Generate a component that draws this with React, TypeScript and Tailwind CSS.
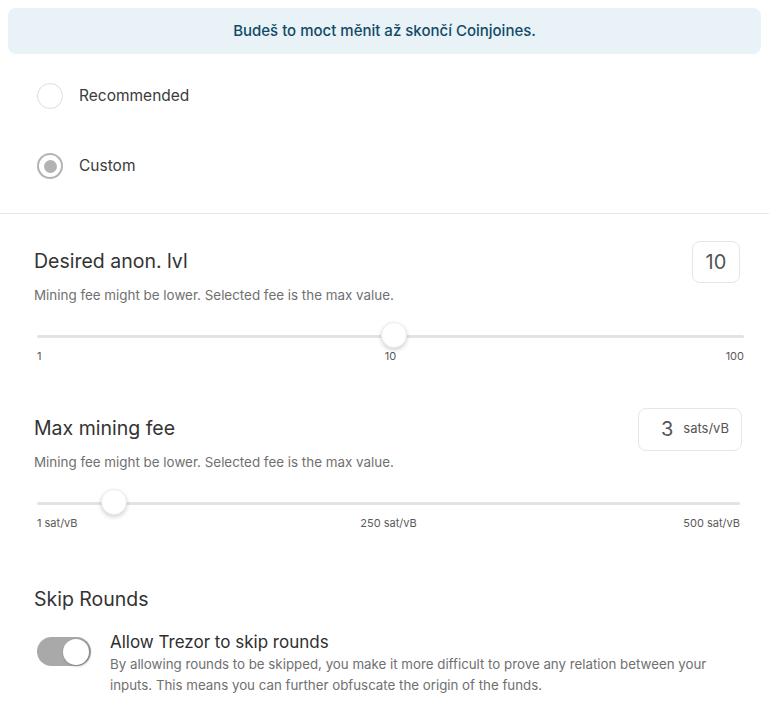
import React from 'react';

const font = { fontFamily: 'Inter, "Noto Sans", sans-serif' };

function Radio({ label, checked }: { label: string; checked?: boolean }) {
  return (
    <div className="flex h-[44px] items-center gap-[16px] pl-[37px]">
      {checked ? (
        <span className="flex h-[26px] w-[26px] items-center justify-center rounded-full border-2 border-[#b3b3b3] bg-white">
          <span className="h-[13px] w-[13px] rounded-full bg-[#b3b3b3]" />
        </span>
      ) : (
        <span className="h-[26px] w-[26px] rounded-full border border-[#dcdcdc] bg-white" />
      )}
      <span className="text-[15.5px] text-[#3b3b3b]">{label}</span>
    </div>
  );
}

function Slider({ pos, labels }: { pos: number; labels: string[] }) {
  return (
    <div className="pl-[3px]">
      <div className="relative h-[26px]">
        <div className="absolute left-0 right-0 top-[13px] h-[3px] rounded bg-[#e3e3e3]" />
        <div
          className="absolute top-0 h-[26px] w-[26px] -translate-x-1/2 rounded-full border border-[#ececec] bg-white shadow-[0_2px_4px_rgba(0,0,0,0.18)]"
          style={{ left: `${pos}%` }}
        />
      </div>
      <div className="mt-[1px] grid grid-cols-3 text-[11px] leading-[14px] text-[#5a5a5a]">
        <span className="text-left">{labels[0]}</span>
        <span className="text-center">{labels[1]}</span>
        <span className="text-right">{labels[2]}</span>
      </div>
    </div>
  );
}

function Section({
  title,
  box,
  pos,
  labels,
  right,
  sliderRight,
}: {
  title: string;
  box: React.ReactNode;
  pos: number;
  labels: string[];
  right: string;
  sliderRight: string;
}) {
  return (
    <div className={`pl-[34px] ${right}`}>
      <div className="flex h-[42px] items-center justify-between">
        <h3 className="text-[19.5px] font-normal text-[#333333]">{title}</h3>
        {box}
      </div>
      <p className="mt-[3px] text-[13.4px] leading-[18px] text-[#707070]">
        Mining fee might be lower. Selected fee is the max value.
      </p>
      <div className={`mt-[18px] ${sliderRight}`}>
        <Slider pos={pos} labels={labels} />
      </div>
    </div>
  );
}

export default function App() {
  return (
    <div className="min-h-[720px] w-[769px] bg-white" style={font}>
      <div className="px-[8px] pt-[8px]">
        <div className="flex h-[46px] items-center justify-center rounded-[8px] bg-[#e8f2f7] text-[15px] font-medium text-[#114a66]">
          Budeš to moct měnit až skončí Coinjoines.
        </div>
      </div>

      <div className="mt-[20px] flex flex-col gap-[26px]">
        <Radio label="Recommended" />
        <Radio label="Custom" checked />
      </div>

      <div className="mt-[25px] h-px bg-[#e8e8e8]" />

      <div className="mt-[27px]">
        <Section
          title="Desired anon. lvl"
          pos={50.5}
          labels={['1', '10', '100']}
          right="pr-[25px]"
          sliderRight=""
          box={
            <div className="mr-[4px] flex h-[42px] w-[48px] items-center justify-center rounded-[8px] border border-[#e6e6e6] text-[20px] text-[#555555]">
              10
            </div>
          }
        />
      </div>

      <div className="mt-[45px]">
        <Section
          title="Max mining fee"
          pos={11}
          labels={['1 sat/vB', '250 sat/vB', '500 sat/vB']}
          right="pr-[27px]"
          sliderRight="pr-[2px]"
          box={
            <div className="flex h-[43px] w-[104px] items-center justify-end gap-[10px] rounded-[8px] border border-[#e6e6e6] pr-[12px] text-[#555555]">
              <span className="text-[20px]">3</span>
              <span className="text-[13px]">sats/vB</span>
            </div>
          }
        />
      </div>

      <div className="mt-[55px] pl-[34px] pr-[40px]">
        <h3 className="text-[19.5px] font-normal text-[#333333]">Skip Rounds</h3>
        <div className="mt-[17px] flex gap-[19px] pl-[3px]">
          <div className="mt-[6px] flex h-[29px] w-[54px] shrink-0 items-center justify-end rounded-full bg-[#a9a9a9] px-[2px]">
            <span className="h-[26px] w-[26px] rounded-full bg-white shadow-[1px_1px_3px_rgba(0,0,0,0.3)]" />
          </div>
          <div>
            <div className="text-[17px] font-normal leading-[22px] text-[#2e2e2e]">
              Allow Trezor to skip rounds
            </div>
            <p className="mt-[1px] text-[13.3px] leading-[21px] text-[#707070]">
              By allowing rounds to be skipped, you make it more difficult to prove any relation between your
              inputs. This means you can further obfuscate the origin of the funds.
            </p>
          </div>
        </div>
      </div>
    </div>
  );
}
